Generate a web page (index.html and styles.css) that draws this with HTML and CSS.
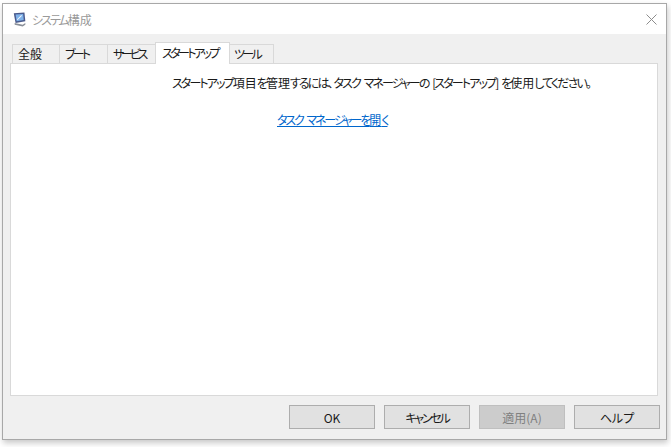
FILE: index.html

```html
<!DOCTYPE html>
<html lang="ja">
<head>
    <meta charset="utf-8">
    <title>システム構成</title>
    <link rel="stylesheet" href="styles.css">
</head>
<body>
    <div class="window">
        <div class="titlebar">
            <svg class="app-icon" width="16" height="17" viewBox="0 0 18 18">
                <path d="M3 13l9 2 3-2v2l-3 2-9-2z" fill="#8a8f98"/>
                <path d="M2 2l12-1 1 10-11 2z" fill="#4a5a8c"/>
                <path d="M4 3.500l8.500-.7.7 6.800-8 1.300z" fill="#7fb2ea"/>
                <path d="M5.500 9l5-5 .8.700-5 5z" fill="#f2f6fb"/>
            </svg>
            <span class="title">システム<span class="kanji">構成</span></span>
            <svg class="close" width="11" height="11" viewBox="0 0 11 11">
                <path d="M.5.500l10 10M10.500.500l-10 10" stroke="#8c8c8c" stroke-width="1" fill="none"/>
            </svg>
        </div>
        <div class="content">
            <div class="tabs">
                <div class="tab tab-1">全般</div>
                <div class="tab tab-2">ブート</div>
                <div class="tab tab-3">サービス</div>
                <div class="tab tab-active">スタートアップ</div>
                <div class="tab tab-5">ツール</div>
            </div>
            <div class="panel">
                <p class="message">スタートアップ<span class="kanji">項目</span>を<span class="kanji">管理</span>するには<span class="kanji">、</span>タスク マネージャーの [スタートアップ] を<span class="kanji">使用</span>してください<span class="kanji">。</span></p>
                <a class="link" href="#">タスク マネージャーを<span class="kanji">開</span>く</a>
            </div>
            <div class="buttons">
                <button type="button">OK</button>
                <button type="button" class="cancel">キャンセル</button>
                <button type="button" class="disabled" disabled>適用(A)</button>
                <button type="button">ヘルプ</button>
            </div>
        </div>
    </div>
</body>
</html>
```

FILE: styles.css

```css
html, body {
  margin: 0;
  height: 447px;
  overflow: hidden;
  background-color: #FFF;
}

body {
  padding: 3px 4px 7px 2px;
  box-sizing: border-box;
  font-family: "Noto Sans CJK JP", "Liberation Sans", sans-serif;
  font-size: 12px;
  font-feature-settings: "palt";
  color: #1a1a1a;
}

.kanji {
  letter-spacing: 0;
}

.window {
  height: 100%;
  display: flex;
  flex-direction: column;
  box-sizing: border-box;
  border: 1px solid #a8a8a8;
  box-shadow: 1px 3px 6px rgba(0, 0, 0, 0.22);
  background-color: #F0F0F0;
}

.titlebar {
  height: 30px;
  flex: none;
  display: flex;
  align-items: center;
  padding: 0 9px 0 9px;
  background-color: #FFF;
}

.app-icon {
  margin-right: 4px;
}

.title {
  color: #9a9a9a;
  font-size: 12px;
  letter-spacing: -2px;
}

.close {
  margin-left: auto;
}

.content {
  flex: 1;
  display: flex;
  flex-direction: column;
  padding: 8px 6px 8px 7px;
}

.tabs {
  display: flex;
  height: 22px;
  padding: 0 0 0 2px;
  align-items: flex-end;
  margin-bottom: -1px;
  margin-right: 2px;
  position: relative;
}

.tab {
  height: 20px;
  line-height: 18px;
  box-sizing: border-box;
  border: 1px solid #d9d9d9;
  border-right: none;
  padding-left: 5px;
  white-space: nowrap;
}

.tab-1 {
  width: 47px;
}

.tab-2 {
  width: 48px;
  letter-spacing: -2.8px;
}

.tab-3 {
  width: 48px;
  letter-spacing: -3.2px;
}

.tab-5 {
  width: 45px;
  border-right: 1px solid #d9d9d9;
  padding-left: 4px;
  letter-spacing: -2.7px;
}

.tab-active {
  width: 75px;
  height: 22px;
  line-height: 20px;
  background-color: #FFF;
  border-right: 1px solid #d9d9d9;
  border-bottom: none;
  padding-left: 6px;
  margin-right: -1px;
  position: relative;
  z-index: 1;
  letter-spacing: -2.6px;
}

.panel {
  height: 333px;
  margin-right: 2px;
  box-sizing: border-box;
  background-color: #FFF;
  border: 1px solid #d9d9d9;
  padding-top: 10px;
}

.message {
  margin: 0 0 0 161px;
  line-height: 18px;
  white-space: nowrap;
  letter-spacing: -1.9px;
  word-spacing: 3px;
}

.link {
  display: block;
  margin: 19px 0 0 266px;
  line-height: 18px;
  color: #0066cc;
  white-space: nowrap;
  letter-spacing: -2.1px;
  word-spacing: 3px;
}

.buttons {
  display: flex;
  justify-content: flex-end;
  gap: 9px;
  margin-top: 9px;
}

button {
  width: 86px;
  height: 24px;
  padding: 0;
  background-color: #E1E1E1;
  border: 1px solid #ADADAD;
  font-family: inherit;
  font-size: 12px;
  font-feature-settings: inherit;
  color: #1a1a1a;
}

button.cancel {
  letter-spacing: -2.2px;
}

button.disabled {
  background-color: #CCC;
  border-color: #BFBFBF;
  color: #808080;
}
```
